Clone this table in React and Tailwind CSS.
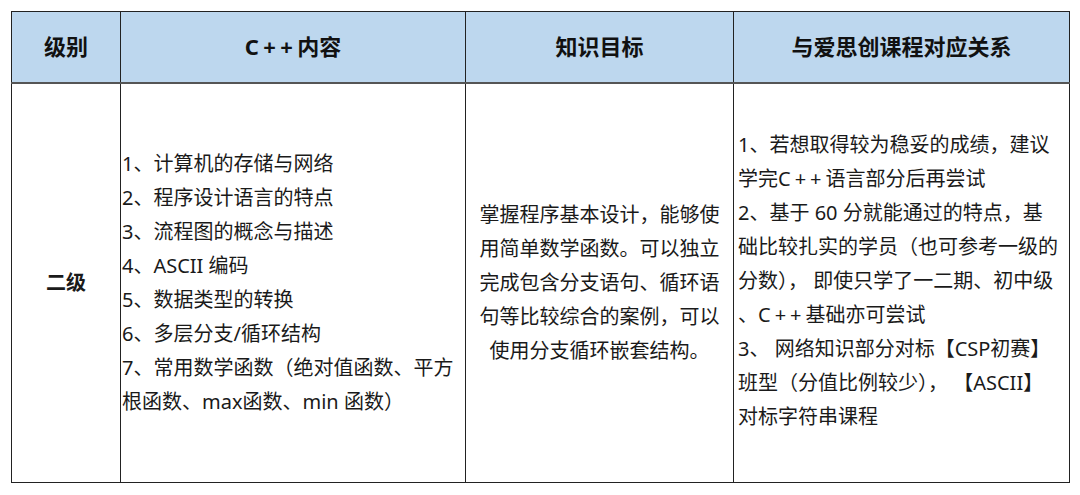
import React from 'react';

const font = { fontFamily: '"Noto Sans", "Noto Sans CJK SC", sans-serif' };

function Cpp() {
    return <span className="tracking-[0.2em]">C++</span>;
}

const contentLines = [
    '1、计算机的存储与网络',
    '2、程序设计语言的特点',
    '3、流程图的概念与描述',
    '4、ASCII 编码',
    '5、数据类型的转换',
    '6、多层分支/循环结构',
    '7、常用数学函数（绝对值函数、平方',
    '根函数、max函数、min 函数）',
];

const goalLines = [
    '掌握程序基本设计，能够使',
    '用简单数学函数。可以独立',
    '完成包含分支语句、循环语',
    '句等比较综合的案例，可以',
    '使用分支循环嵌套结构。',
];

export default function App() {
    return (
        <div className="w-[1080px] h-[495px] bg-white pl-[11px] pt-[11px] text-[#1a1a1a]" style={font}>
            <table className="table-fixed border-collapse w-[1058px]">
                <colgroup>
                    <col className="w-[109px]" />
                    <col className="w-[345px]" />
                    <col className="w-[268px]" />
                    <col className="w-[336px]" />
                </colgroup>
                <thead>
                    <tr className="h-[71px] bg-[#bdd7ee] text-[22px] font-bold text-[#111]">
                        <th className="border border-[#222] border-b-2 border-b-[#555]">级别</th>
                        <th className="border border-[#222] border-b-2 border-b-[#555]">
                            <Cpp />内容
                        </th>
                        <th className="border border-[#222] border-b-2 border-b-[#555]">知识目标</th>
                        <th className="border border-[#222] border-b-2 border-b-[#555]">与爱思创课程对应关系</th>
                    </tr>
                </thead>
                <tbody>
                    <tr className="h-[400px] text-[20px] leading-[34px]">
                        <td className="border border-[#222] text-center font-bold text-[20px]">二级</td>
                        <td className="border border-[#222] align-middle pl-[1px]">
                            {contentLines.map((l) => (
                                <div key={l} className="whitespace-nowrap">{l}</div>
                            ))}
                        </td>
                        <td className="border border-[#222] align-middle text-center">
                            {goalLines.map((l) => (
                                <div key={l} className="whitespace-nowrap">{l}</div>
                            ))}
                        </td>
                        <td className="border border-[#222] align-middle pl-[4px] pb-[4px]">
                            <div className="whitespace-nowrap">1、若想取得较为稳妥的成绩，建议</div>
                            <div className="whitespace-nowrap">学完<Cpp />语言部分后再尝试</div>
                            <div className="whitespace-nowrap">2、基于 60 分就能通过的特点，基</div>
                            <div className="whitespace-nowrap">础比较扎实的学员（也可参考一级的</div>
                            <div className="whitespace-nowrap">分数）， 即使只学了一二期、初中级</div>
                            <div className="whitespace-nowrap">、<Cpp />基础亦可尝试</div>
                            <div className="whitespace-nowrap">3、 网络知识部分对标【CSP初赛】</div>
                            <div className="whitespace-nowrap">班型（分值比例较少）， 【ASCII】</div>
                            <div className="whitespace-nowrap">对标字符串课程</div>
                        </td>
                    </tr>
                </tbody>
            </table>
        </div>
    );
}
